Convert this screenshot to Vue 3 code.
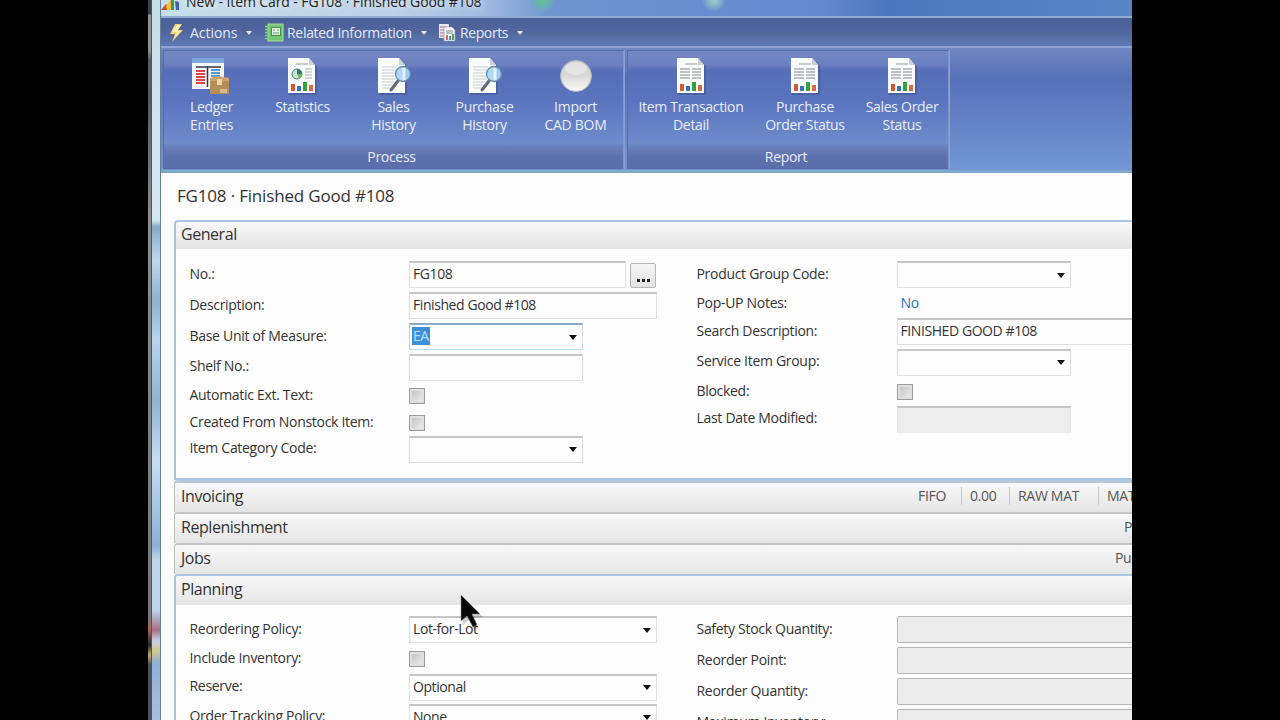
<script setup>
const menus = [
  { label: 'Actions', icon: 'bolt', cls: 'm-actions' },
  { label: 'Related Information', icon: 'book', cls: 'm-related' },
  { label: 'Reports', icon: 'reports', cls: 'm-reports' },
]

const groups = [
  {
    name: 'Process',
    buttons: [
      { lines: ['Ledger', 'Entries'], icon: 'ledger', width: 91 },
      { lines: ['Statistics'], icon: 'stats', width: 91 },
      { lines: ['Sales', 'History'], icon: 'history', width: 91 },
      { lines: ['Purchase', 'History'], icon: 'history', width: 91 },
      { lines: ['Import', 'CAD BOM'], icon: 'ball', width: 91 },
    ],
  },
  {
    name: 'Report',
    buttons: [
      { lines: ['Item Transaction', 'Detail'], icon: 'report', width: 126 },
      { lines: ['Purchase', 'Order Status'], icon: 'report', width: 102 },
      { lines: ['Sales Order', 'Status'], icon: 'report', width: 92 },
    ],
  },
]

const general = [
  [
    { label: 'No.:', type: 'text', value: 'FG108', width: 217, assist: true, height: 31 },
    { label: 'Description:', type: 'text', value: 'Finished Good #108', width: 248, height: 31 },
    { label: 'Base Unit of Measure:', type: 'combo', value: 'EA', width: 174, focused: true, height: 31 },
    { label: 'Shelf No.:', type: 'text', value: '', width: 174, height: 30 },
    { label: 'Automatic Ext. Text:', type: 'check', height: 28 },
    { label: 'Created From Nonstock Item:', type: 'check', height: 25 },
    { label: 'Item Category Code:', type: 'combo', value: '', width: 174, height: 28 },
  ],
  [
    { label: 'Product Group Code:', type: 'combo', value: '', width: 174, height: 31 },
    { label: 'Pop-UP Notes:', type: 'link', value: 'No', height: 27 },
    { label: 'Search Description:', type: 'text', value: 'FINISHED GOOD #108', width: 248, height: 29 },
    { label: 'Service Item Group:', type: 'combo', value: '', width: 174, height: 32 },
    { label: 'Blocked:', type: 'check', height: 27 },
    { label: 'Last Date Modified:', type: 'disabled', width: 174, height: 28 },
  ],
]

const planning = [
  [
    { label: 'Reordering Policy:', type: 'combo', value: 'Lot-for-Lot', width: 248, height: 31 },
    { label: 'Include Inventory:', type: 'check', height: 28 },
    { label: 'Reserve:', type: 'combo', value: 'Optional', width: 248, height: 28 },
    { label: 'Order Tracking Policy:', type: 'combo', value: 'None', width: 248, height: 32 },
  ],
  [
    { label: 'Safety Stock Quantity:', type: 'outlined', width: 248, height: 31 },
    { label: 'Reorder Point:', type: 'outlined', width: 248, height: 31 },
    { label: 'Reorder Quantity:', type: 'outlined', width: 248, height: 31 },
    { label: 'Maximum Inventory:', type: 'outlined', width: 248, height: 31 },
  ],
]

const sections = [
  { title: 'General', rows: general, cls: 'open general' },
  { title: 'Invoicing', summary: ['FIFO', '0.00', 'RAW MAT', 'MAT'], cls: 'invoicing' },
  { title: 'Replenishment', summary: ['Purchase'], cls: 'replenishment' },
  { title: 'Jobs', summary: ['Purchase'], cls: 'jobs' },
  { title: 'Planning', rows: planning, cls: 'open planning' },
]
</script>

<template>
  <div class="screen">
    <div class="desktop-edge"></div>
    <div class="glass-edge"></div>
    <main class="window">
      <header class="titlebar">
        <svg class="app-icon" width="20" height="12" viewBox="0 0 20 12">
          <path d="M0 10L5 4l3 3-2 3z" fill="#c7453c" />
          <path d="M5 6l5-7v11H6z" fill="#edc33b" />
          <path d="M10 0h3v10h-3z" fill="#3b9a57" />
          <path d="M14 1l4 1v8h-3z" fill="#4260ae" />
        </svg>
        <span>New - Item Card - FG108 · Finished Good #108</span>
      </header>

      <nav class="menubar">
        <div v-for="m in menus" :key="m.label" class="menu" :class="m.cls">
          <svg v-if="m.icon === 'bolt'" width="16" height="20" viewBox="0 0 16 20">
            <path d="M6 1h7l-4 6h5L3 19l3-8H1z" fill="#f3cf78" />
            <path d="M8 2h4L8 8h4l-7 7 3-6H3z" fill="#fff0b5" />
          </svg>
          <svg v-else-if="m.icon === 'book'" width="20" height="20" viewBox="0 0 20 20">
            <path d="M1 2h4v16H1z" fill="#4c9465" />
            <path d="M2 3v14" stroke="#d8efd9" stroke-dasharray="1 2" />
            <rect x="4" y="1" width="15" height="17" fill="#73c774" stroke="#a9dda3" />
            <rect x="7.5" y="4.500" width="9" height="8" fill="#e0f3df" stroke="#448b4b" />
            <path d="M9 7h2m2 0h2M9 10h6" stroke="#5d9f65" />
          </svg>
          <svg v-else width="18" height="19" viewBox="0 0 18 19">
            <path d="M1 1h10v14H1z" fill="#e8e6ee" />
            <path d="M2 4h7M2 7h4M2 10h4M2 13h4" stroke="#a86d84" />
            <path d="M6 4h8l3 3v11H6z" fill="#f7f8fc" stroke="#9294ac" stroke-width=".6" />
            <path d="M8 8h7M8 10h7" stroke="#7b8596" />
            <path d="M8 12h2v5H8z" fill="#da6b59" />
            <path d="M11 13h2v4h-2z" fill="#468bc3" />
            <path d="M14 11h2v6h-2z" fill="#5ba058" />
          </svg>
          <span class="menu-label">{{ m.label }}</span>
          <i class="menu-arrow"></i>
        </div>
      </nav>

      <div class="ribbon">
        <section v-for="g in groups" :key="g.name" class="group">
          <div class="group-buttons">
            <div v-for="b in g.buttons" :key="b.lines.join(' ')" class="ribbon-button" :style="{ width: b.width + 'px' }">
              <svg v-if="b.icon === 'ledger'" class="ledger" width="38" height="38" viewBox="0 0 38 38">
                <path d="M1 1h32v31H1z" fill="#f7f8fc" />
                <path d="M1 1h32v5H1z" fill="#7da5d8" />
                <path d="M5 10h25M16.500 9v21" stroke="#303947" stroke-width="1.500" />
                <path d="M5 14h9M5 17h9M5 20h9M5 23h9M5 26h9" stroke="#dc4545" stroke-width="2" />
                <path d="M20 13h9M20 16h9M20 19h9" stroke="#579bd0" stroke-width="2" />
                <path d="M19 21h19v16H19z" fill="#b48d57" />
                <path d="M19 21l8-2 11 2v3H19z" fill="#c9a56e" />
                <path d="M26 22h5v6h-5z" fill="#ead7ad" />
                <path d="M29 32h7v4h-7z" fill="#d5ba8d" />
              </svg>
              <svg v-else-if="b.icon === 'ball'" width="36" height="38" viewBox="0 0 36 38">
                <defs>
                  <linearGradient id="ball" x1="0" y1="0" x2="0" y2="1">
                    <stop offset="0" stop-color="#d0d1d0" />
                    <stop offset=".5" stop-color="#d9d9d8" />
                    <stop offset="1" stop-color="#fafaf8" />
                  </linearGradient>
                </defs>
                <circle cx="18" cy="19" r="15.500" fill="url(#ball)" stroke="#b0b4bd" />
                <ellipse cx="18" cy="11.500" rx="11" ry="6.500" fill="#ededed" opacity=".6" />
              </svg>
              <svg v-else :class="b.icon" width="38" height="38" viewBox="0 0 38 38">
                <path d="M6 3h22l6 6v29H6z" fill="#3d4f8a" opacity=".5" />
                <path d="M5 1h21l6 7v28H5z" fill="#fbfcfc" />
                <path d="M26 1v7h6z" fill="#cbd1d7" />
                <template v-if="b.icon === 'history'">
                  <path d="M9 10h15M9 13h15M9 16h14M9 19h14M9 22h14M9 25h14M9 28h12M9 31h10" stroke="#c8ccd0" stroke-width="1.200" />
                  <path d="M25 24l-7 9" stroke="#626b77" stroke-width="3" stroke-linecap="round" />
                  <circle cx="30" cy="17" r="7.500" fill="#a9d3f3" fill-opacity=".9" stroke="#668caf" stroke-width="1.300" />
                  <path d="M31 11v12" stroke="#e3f3fe" stroke-width="3" />
                </template>
                <template v-else>
                  <path d="M13 7h12" stroke="#969c9f" />
                  <template v-if="b.icon === 'stats'">
                    <circle cx="14" cy="17" r="5" fill="#cbe4d7" stroke="#497b73" />
                    <path d="M14 17v-5a5 5 0 0 1 5 5z" fill="#27806f" />
                    <path d="M14 17h5a5 5 0 0 1-3 4.600z" fill="#6cb85b" />
                    <path d="M22 12h7M22 15h7M22 18h7M22 21h7" stroke="#aab0b3" />
                  </template>
                  <path v-else d="M8 12h10M8 15h10M8 18h10M8 21h10M20 12h9M20 15h9M20 18h9M20 21h9" stroke="#a9adb0" stroke-width="1.500" />
                  <path d="M8 27h4v7H8z" fill="#df5534" />
                  <path d="M14 29h4v5h-4z" fill="#2f75b8" />
                  <path d="M20 25h4v9h-4z" fill="#33a13c" />
                  <path d="M26 28h4v6h-4z" fill="#dd6845" />
                </template>
              </svg>
              <span v-for="line in b.lines" :key="line" class="button-line">{{ line }}</span>
            </div>
          </div>
          <div class="group-name">{{ g.name }}</div>
        </section>
      </div>

      <div class="page">
        <h1>FG108 · Finished Good #108</h1>
        <section v-for="s in sections" :key="s.title" class="tab" :class="s.cls">
          <div class="tab-head">
            <h2>{{ s.title }}</h2>
            <div v-if="s.summary" class="summary">
              <span v-for="v in s.summary" :key="v">{{ v }}</span>
            </div>
          </div>
          <div v-if="s.rows" class="tab-body">
            <div v-for="(column, ci) in s.rows" :key="ci" class="column">
              <div v-for="f in column" :key="f.label" class="row" :style="{ height: f.height + 'px' }">
                <label>{{ f.label }}</label>
                <i v-if="f.type === 'check'" class="check"></i>
                <a v-else-if="f.type === 'link'">{{ f.value }}</a>
                <div v-else class="field" :class="[f.type, { focused: f.focused }]" :style="{ width: f.width + 'px' }">
                  <span :class="{ selected: f.focused }">{{ f.value }}</span>
                  <i v-if="f.type === 'combo'" class="arrow"></i>
                </div>
                <button v-if="f.assist" type="button"><i></i><i></i><i></i></button>
              </div>
            </div>
          </div>
        </section>
      </div>
    </main>

    <svg class="cursor" width="26" height="38" viewBox="0 0 26 38">
      <path d="M3 3v27l6-5 5 11 5-3-5-10 9-1z" fill="#000" opacity=".18" />
      <path d="M1 0v26l6-5 6 11 4-2-5-11h8z" fill="#080808" stroke="#8b8b8b" stroke-width=".5" />
    </svg>
  </div>
</template>

<style>
body { margin: 0; background: #000; overflow: hidden; }
</style>

<style scoped>
* { box-sizing: border-box; }
.screen { display: flex; width: 1280px; height: 720px; padding: 0 148px; overflow: hidden; background: #000; color: #333; font: 14px/18px "Open Sans", "Noto Sans", sans-serif; letter-spacing: -.3px; }
.desktop-edge { flex: 0 0 4px; background: linear-gradient(#39434b 0 14px, #8d9291 15px 50px, #555a5d 60px 100px, #8d8d8b 220px, #77797a 615px, #a66455 630px, #29272d 645px, #bda76a 655px, #4c535c 665px); border-right: 1px solid #4d565c; }
.glass-edge { flex: 0 0 9px; border-right: 1px solid #667d99; background: linear-gradient(#c5dfe4, #d5e8f2 220px, #86aacb 227px, #c1d8ed 260px, #8eb2d1 300px, #b8d5ed 340px, #91b2d0 400px, #c7def4 460px, #8cb1d3 545px, #bed5ed 560px 610px, #a97184 630px, #c4d2e7 641px, #d5c78c 651px, #91b0d5 662px, #a7c0e1); }
.window { flex: none; width: 971px; height: 720px; overflow: hidden; background: #fcfcfc; }

.titlebar { display: flex; align-items: flex-start; height: 18px; border-bottom: 2px solid #91abd3; background: radial-gradient(circle at 381px 0, #64bd9d 0 3px, transparent 13px), radial-gradient(circle at 553px 0, #93c5c9 0 3px, transparent 12px), linear-gradient(90deg, #c7dfe8, #bdd1e8 230px, #a3bce2 320px, #6f95d0 390px, #6489cf 660px, #4b75be 730px, #5a85c5); color: #222; overflow: hidden; }
.titlebar span { margin-top: -7px; margin-left: 5px; letter-spacing: -.1px; text-shadow: 0 0 6px #fff; }
.app-icon { flex: none; }
.menubar { display: flex; height: 30px; padding: 1px 0 0 8px; border-bottom: 2px solid #8da3d3; background: linear-gradient(#4a6196, #5064a0 45%, #536ba0 60%, #5f78b8); color: #e4eafa; }
.menu { display: flex; align-items: center; height: 27px; }
.menu-label { white-space: nowrap; }
.m-actions { width: 95px; }
.m-related { width: 174px; }
.m-actions .menu-label { margin-left: 5px; letter-spacing: -.05px; }
.m-related .menu-label { margin-left: 3px; }
.m-reports .menu-label { margin-left: 4px; letter-spacing: -.4px; }
.menu-arrow { margin-left: 9px; border: 3.5px solid transparent; border-top: 4px solid #e4eafa; border-bottom: 0; }

.ribbon { display: flex; gap: 3px; height: 125px; padding: 2px 0 1px 2px; border-bottom: 3px solid #7fa6cb; background: linear-gradient(#7187c2, #5670b7 30px, #5f7bc1 55px, #7396d5); color: #e9edfa; }
.group { display: flex; flex-direction: column; height: 119px; border: 1px solid #526da9; border-right-color: #8297cc; background: linear-gradient(#7387c3, #6b80c0 14px, #566eb7 19px, #5a74bf 50px, #6c8acb 90px, #7391d0); box-shadow: 1px 0 #8ba0d2; }
.group-buttons { display: flex; height: 91px; padding: 6px 2px 0; }
.group:nth-child(2) .group-buttons { padding: 6px 0 0; }
.ribbon-button { display: flex; flex-direction: column; align-items: center; flex: none; }
.ribbon-button svg { flex: none; margin-bottom: 2px; }
.ribbon-button .ledger, .ribbon-button .history { margin-left: -4px; }
.ribbon-button .stats, .ribbon-button .report { margin-left: -1px; }
.button-line { height: 18px; white-space: nowrap; line-height: 19px; }
.group-name { height: 26px; padding-right: 4px; background: linear-gradient(#708dcb, #667fba 6px, #5c70ab 15px, #5c6fad); line-height: 29px; text-align: center; }

.page { padding: 0 0 0 13px; }
h1, h2 { margin: 0; font-weight: 400; }
h1 { height: 47px; padding-left: 3px; font-size: 17px; line-height: 46px; letter-spacing: -.18px; }
.tab { width: 1000px; border: 1px solid #bcbcbc; border-width: 2px 1px 0 1px; border-top-color: #c4c4c4; border-radius: 4px 0 0; background: #fdfdfd; }
.tab.open { border-color: #a9c4e4; border-left-width: 2px; }
.tab.invoicing { border-top: 3px solid #b5c8d8; }
.tab-head { display: flex; justify-content: space-between; width: 957px; height: 29px; padding-left: 6px; border-radius: 3px 0 0; background: linear-gradient(#f8f8f8, #e5e5e5); }
.open .tab-head { padding-left: 5px; }
.tab-head h2 { font-size: 16px; line-height: 27px; letter-spacing: -.45px; }
.general { height: 260px; border-bottom: 2px solid #abcce8; }
.general .tab-head { height: 27px; }
.general h2 { line-height: 24px; }
.invoicing { height: 32px; }
.replenishment, .jobs { height: 31px; }
.summary { display: flex; width: 214px; align-items: center; height: 26px; overflow: hidden; color: #555; white-space: nowrap; }
.summary span { flex: none; line-height: 18px; }
.invoicing .summary span + span { border-left: 1px solid #c8c8c8; padding-left: 8px; }
.invoicing .summary span:nth-child(1) { width: 43px; }
.invoicing .summary span:nth-child(2) { width: 48px; }
.invoicing .summary span:nth-child(3) { width: 89px; }
.replenishment .summary { width: 8px; }
.jobs .summary { width: 17px; }
.tab-body { display: flex; padding: 10px 0 0 13px; }
.planning .tab-body { padding-top: 9px; }
.column { flex: 0 0 507px; }
.column + .column { flex-basis: 500px; }
.row { display: flex; align-items: center; }
.row label { flex: 0 0 220px; padding: 0 0 2px .5px; color: #333; }
.column + .column .row label { flex-basis: 200.5px; }
.row a { padding: 0 0 1px 4px; color: #2874bd; }
.field { display: flex; flex: none; align-items: center; justify-content: space-between; height: 27px; padding: 0 5px 2px 3px; border: 1px solid #e0e0e0; border-top: 2px solid #c6c6c6; background: #fefefe; letter-spacing: -.42px; }
.field.focused { border-color: #8ea9c4 #dcdcdc #b7dcf1 #a9d5ee; }
.field.disabled { border-color: #c4c4c4 #e6e6e6 #ececec; background: #ededed; }
.field.outlined { border: 1px solid #b7b7b7; border-radius: 2px; background: #ececec; }
.selected { padding: 0 1px; margin-left: -1px; background: #3f8ed8; color: #b9e2ff; }
.arrow { margin-top: 2px; border: 4.5px solid transparent; border-top: 5px solid #111; border-bottom: 0; }
.check { width: 16px; height: 16px; border: 1px solid #9a9a9a; background: linear-gradient(135deg, #bcbcbc, #f2f2f2); box-shadow: inset 0 0 0 2px #e0e0e0; }
.row button { display: flex; align-items: flex-end; justify-content: center; gap: 2px; width: 26px; height: 25px; margin: 1px 0 0 4px; padding: 0 0 5px; border: 1px solid #b5b5b5; border-radius: 2px; background: linear-gradient(#f5f5f5, #e2e2e2); }
.row button i { width: 3px; height: 3px; background: #222; }
.cursor { position: absolute; top: 595px; left: 460px; }
</style>
